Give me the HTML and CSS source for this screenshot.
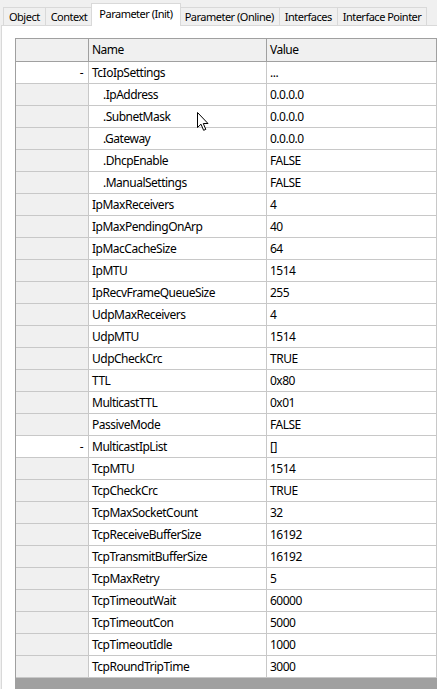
FILE: index.html
```html
<!DOCTYPE html>
<html>
<head>
<meta charset="utf-8">
<link rel="stylesheet" href="styles.css">
</head>
<body>
<div class="tabs">
  <div class="tab">Object</div>
  <div class="tab">Context</div>
  <div class="tab active">Parameter (Init)</div>
  <div class="tab">Parameter (Online)</div>
  <div class="tab">Interfaces</div>
  <div class="tab">Interface Pointer</div>
</div>
<div class="panel">
  <div class="grid">
    <div class="row head">
      <div class="cell rh"></div>
      <div class="cell name">Name</div>
      <div class="cell value">Value</div>
    </div>
    <div class="row open"><div class="cell rh">-</div><div class="cell name">TcIoIpSettings</div><div class="cell value">...</div></div>
    <div class="row child"><div class="cell rh"></div><div class="cell name">.IpAddress</div><div class="cell value">0.0.0.0</div></div>
    <div class="row child"><div class="cell rh"></div><div class="cell name">.SubnetMask</div><div class="cell value">0.0.0.0</div></div>
    <div class="row child"><div class="cell rh"></div><div class="cell name">.Gateway</div><div class="cell value">0.0.0.0</div></div>
    <div class="row child"><div class="cell rh"></div><div class="cell name">.DhcpEnable</div><div class="cell value">FALSE</div></div>
    <div class="row child"><div class="cell rh"></div><div class="cell name">.ManualSettings</div><div class="cell value">FALSE</div></div>
    <div class="row"><div class="cell rh"></div><div class="cell name">IpMaxReceivers</div><div class="cell value">4</div></div>
    <div class="row"><div class="cell rh"></div><div class="cell name">IpMaxPendingOnArp</div><div class="cell value">40</div></div>
    <div class="row"><div class="cell rh"></div><div class="cell name">IpMacCacheSize</div><div class="cell value">64</div></div>
    <div class="row"><div class="cell rh"></div><div class="cell name">IpMTU</div><div class="cell value">1514</div></div>
    <div class="row"><div class="cell rh"></div><div class="cell name">IpRecvFrameQueueSize</div><div class="cell value">255</div></div>
    <div class="row"><div class="cell rh"></div><div class="cell name">UdpMaxReceivers</div><div class="cell value">4</div></div>
    <div class="row"><div class="cell rh"></div><div class="cell name">UdpMTU</div><div class="cell value">1514</div></div>
    <div class="row"><div class="cell rh"></div><div class="cell name">UdpCheckCrc</div><div class="cell value">TRUE</div></div>
    <div class="row"><div class="cell rh"></div><div class="cell name">TTL</div><div class="cell value">0x80</div></div>
    <div class="row"><div class="cell rh"></div><div class="cell name">MulticastTTL</div><div class="cell value">0x01</div></div>
    <div class="row"><div class="cell rh"></div><div class="cell name">PassiveMode</div><div class="cell value">FALSE</div></div>
    <div class="row open"><div class="cell rh">-</div><div class="cell name">MulticastIpList</div><div class="cell value">[]</div></div>
    <div class="row"><div class="cell rh"></div><div class="cell name">TcpMTU</div><div class="cell value">1514</div></div>
    <div class="row"><div class="cell rh"></div><div class="cell name">TcpCheckCrc</div><div class="cell value">TRUE</div></div>
    <div class="row"><div class="cell rh"></div><div class="cell name">TcpMaxSocketCount</div><div class="cell value">32</div></div>
    <div class="row"><div class="cell rh"></div><div class="cell name">TcpReceiveBufferSize</div><div class="cell value">16192</div></div>
    <div class="row"><div class="cell rh"></div><div class="cell name">TcpTransmitBufferSize</div><div class="cell value">16192</div></div>
    <div class="row"><div class="cell rh"></div><div class="cell name">TcpMaxRetry</div><div class="cell value">5</div></div>
    <div class="row"><div class="cell rh"></div><div class="cell name">TcpTimeoutWait</div><div class="cell value">60000</div></div>
    <div class="row"><div class="cell rh"></div><div class="cell name">TcpTimeoutCon</div><div class="cell value">5000</div></div>
    <div class="row"><div class="cell rh"></div><div class="cell name">TcpTimeoutIdle</div><div class="cell value">1000</div></div>
    <div class="row"><div class="cell rh"></div><div class="cell name">TcpRoundTripTime</div><div class="cell value">3000</div></div>
    <div class="filler"></div>
  </div>
</div>
<svg class="cursor" width="13" height="20" viewBox="0 0 13 20">
  <path d="M0.5 0.5 L0.5 15.5 L4 12.2 L6.6 18.3 L8.8 17.4 L6.3 11.5 L11 11.5 Z" fill="#fff" stroke="#000" stroke-width="1" stroke-linejoin="miter"/>
</svg>
</body>
</html>
```

FILE: styles.css
```css
html, body {
  margin: 0;
  height: 100%;
  overflow: hidden;
}

body {
  background: #f0f0f0;
  font-family: "Noto Sans", "Liberation Sans", sans-serif;
  font-size: 12px;
  letter-spacing: -0.5px;
  color: #000;
  display: flex;
  flex-direction: column;
}

/* tab strip */
.tabs {
  height: 25px;
  display: flex;
  align-items: flex-end;
  padding-left: 3px;
  flex: none;
  font-size: 11px;
}

.tab {
  height: 17px;
  line-height: 17px;
  padding: 0 5px;
  border: 1px solid #d9d9d9;
  border-bottom: none;
  background: #f0f0f0;
  margin-right: -1px;
  white-space: nowrap;
}

.tab.active {
  height: 22px;
  line-height: 19px;
  background: #fff;
  margin-bottom: -1px;
  position: relative;
  z-index: 1;
  margin-left: -1px;
  margin-right: -2px;
  padding: 0 7px;
}

/* page behind the tabs */
.panel {
  flex: 1;
  background: #fff;
  border-top: 1px solid #d9d9d9;
  border-left: 1px solid #d9d9d9;
  margin-left: 1px;
  padding: 12px 0 0 13px;
  display: flex;
  min-height: 0;
}

/* property grid */
.grid {
  flex: 1;
  display: flex;
  flex-direction: column;
  border-top: 1px solid #a0a0a0;
  border-left: 1px solid #a0a0a0;
  min-width: 0;
}

.row {
  display: flex;
  height: 22px;
  flex: none;
}

.cell {
  box-sizing: border-box;
  border-right: 1px solid #c8c8c8;
  border-bottom: 1px solid #c8c8c8;
  line-height: 21px;
  white-space: nowrap;
  overflow: hidden;
}

.rh {
  width: 73px;
  background: #f0f0f0;
  text-align: right;
  padding-right: 5px;
}

.name {
  width: 178px;
  padding-left: 3px;
}

.value {
  flex: 1;
  padding-left: 3px;
}

.head {
  height: 23px;
}

.head .cell {
  background: #f0f0f0;
  border-bottom-color: #a0a0a0;
  border-right-color: #a0a0a0;
  line-height: 22px;
}

.open .rh {
  background: #fff;
}

.child .name {
  padding-left: 14px;
}

.filler {
  flex: 1;
  background: #a0a0a0;
}

/* mouse pointer over the grid */
.cursor {
  position: absolute;
  left: 197px;
  top: 112px;
}
```
